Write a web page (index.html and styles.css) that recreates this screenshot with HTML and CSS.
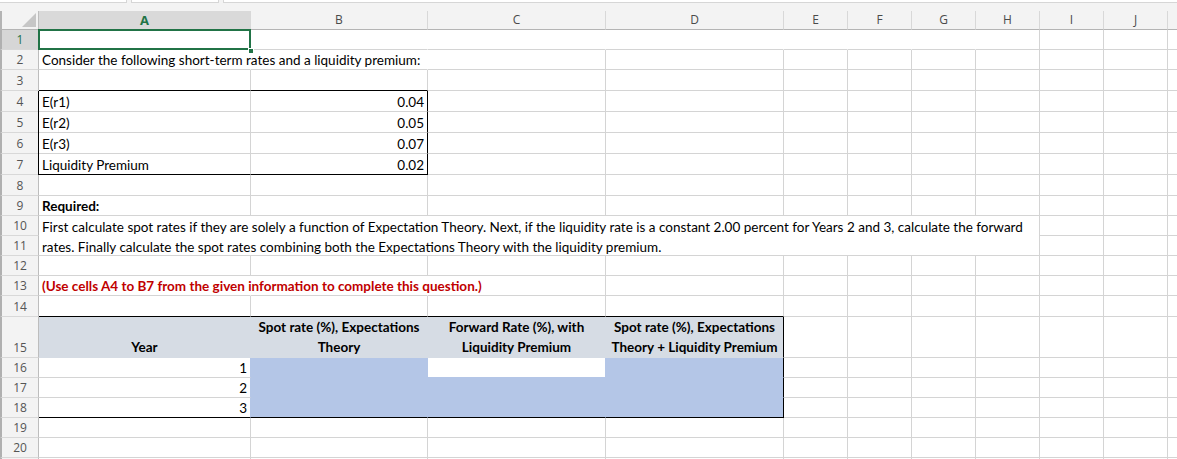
FILE: index.html
```html
<!DOCTYPE html>
<html>
<head>
<meta charset="utf-8">
<title>Sheet</title>
<link rel="stylesheet" href="styles.css">
</head>
<body>
<div class="sheet">
  <div class="topbar"><div class="fb fb1"></div><div class="fb fb2"></div><div class="fb fb3"></div></div>

  <div class="corner"><svg class="tri" width="37" height="18" viewBox="0 0 37 18"><polygon points="20,16 34,16 34,2" fill="#c6c6c6"/></svg></div>
  <div class="ch sel">A</div><div class="ch">B</div><div class="ch">C</div><div class="ch">D</div><div class="ch">E</div><div class="ch">F</div><div class="ch">G</div><div class="ch">H</div><div class="ch">I</div><div class="ch">J</div><div class="ch k"></div>

  <div class="rh sel">1</div><div class="c nr"></div><div class="c nr"></div><div class="c nr"></div><div class="c nr"></div><div class="c nr"></div><div class="c nr"></div><div class="c nr"></div><div class="c"></div><div class="c"></div><div class="c"></div><div class="c k"></div>

  <div class="rh">2</div><div class="c nr">Consider the following short-term rates and a liquidity premium:</div><div class="c nr"></div><div class="c"></div><div class="c"></div><div class="c"></div><div class="c"></div><div class="c"></div><div class="c"></div><div class="c"></div><div class="c"></div><div class="c k"></div>

  <div class="rh">3</div><div class="c bb"></div><div class="c bb"></div><div class="c"></div><div class="c"></div><div class="c"></div><div class="c"></div><div class="c"></div><div class="c"></div><div class="c"></div><div class="c"></div><div class="c k"></div>

  <div class="rh">4</div><div class="c bl">E(r1)</div><div class="c br num">0.04</div><div class="c"></div><div class="c"></div><div class="c"></div><div class="c"></div><div class="c"></div><div class="c"></div><div class="c"></div><div class="c"></div><div class="c k"></div>

  <div class="rh">5</div><div class="c bl">E(r2)</div><div class="c br num">0.05</div><div class="c"></div><div class="c"></div><div class="c"></div><div class="c"></div><div class="c"></div><div class="c"></div><div class="c"></div><div class="c"></div><div class="c k"></div>

  <div class="rh">6</div><div class="c bl">E(r3)</div><div class="c br num">0.07</div><div class="c"></div><div class="c"></div><div class="c"></div><div class="c"></div><div class="c"></div><div class="c"></div><div class="c"></div><div class="c"></div><div class="c k"></div>

  <div class="rh">7</div><div class="c bl bb">Liquidity Premium</div><div class="c br bb num">0.02</div><div class="c"></div><div class="c"></div><div class="c"></div><div class="c"></div><div class="c"></div><div class="c"></div><div class="c"></div><div class="c"></div><div class="c k"></div>

  <div class="rh">8</div><div class="c"></div><div class="c"></div><div class="c"></div><div class="c"></div><div class="c"></div><div class="c"></div><div class="c"></div><div class="c"></div><div class="c"></div><div class="c"></div><div class="c k"></div>

  <div class="rh">9</div><div class="c bold">Required:</div><div class="c"></div><div class="c"></div><div class="c"></div><div class="c"></div><div class="c"></div><div class="c"></div><div class="c"></div><div class="c"></div><div class="c"></div><div class="c k"></div>

  <div class="rh">10</div><div class="c merge">First calculate spot rates if they are solely a function of Expectation Theory. Next, if the liquidity rate is a constant 2.00 percent for Years 2 and 3, calculate the forward<br>rates. Finally calculate the spot rates combining both the Expectations Theory with the liquidity premium.</div><div class="c"></div><div class="c"></div><div class="c k"></div>

  <div class="rh">11</div><div class="c"></div><div class="c"></div><div class="c k"></div>

  <div class="rh">12</div><div class="c"></div><div class="c"></div><div class="c"></div><div class="c"></div><div class="c"></div><div class="c"></div><div class="c"></div><div class="c"></div><div class="c"></div><div class="c"></div><div class="c k"></div>

  <div class="rh">13</div><div class="c nr note">(Use cells A4 to B7 from the given information to complete this question.)</div><div class="c nr"></div><div class="c"></div><div class="c"></div><div class="c"></div><div class="c"></div><div class="c"></div><div class="c"></div><div class="c"></div><div class="c"></div><div class="c k"></div>

  <div class="rh">14</div><div class="c bb"></div><div class="c bb"></div><div class="c bb"></div><div class="c bb"></div><div class="c"></div><div class="c"></div><div class="c"></div><div class="c"></div><div class="c"></div><div class="c"></div><div class="c k"></div>

  <div class="rh">15</div><div class="c hdr">Year</div><div class="c hdr">Spot rate (%), Expectations<br>Theory</div><div class="c hdr">Forward Rate (%), with<br>Liquidity Premium</div><div class="c hdr br">Spot rate (%), Expectations<br>Theory + Liquidity Premium</div><div class="c"></div><div class="c"></div><div class="c"></div><div class="c"></div><div class="c"></div><div class="c"></div><div class="c k"></div>

  <div class="rh">16</div><div class="c num nextfill">1</div><div class="c fill"></div><div class="c blank"></div><div class="c fill br"></div><div class="c"></div><div class="c"></div><div class="c"></div><div class="c"></div><div class="c"></div><div class="c"></div><div class="c k"></div>

  <div class="rh">17</div><div class="c num nextfill">2</div><div class="c fill"></div><div class="c fill"></div><div class="c fill br"></div><div class="c"></div><div class="c"></div><div class="c"></div><div class="c"></div><div class="c"></div><div class="c"></div><div class="c k"></div>

  <div class="rh">18</div><div class="c num nextfill bb">3</div><div class="c fill bb"></div><div class="c fill bb"></div><div class="c fill br bb"></div><div class="c"></div><div class="c"></div><div class="c"></div><div class="c"></div><div class="c"></div><div class="c"></div><div class="c k"></div>

  <div class="rh">19</div><div class="c"></div><div class="c"></div><div class="c"></div><div class="c"></div><div class="c"></div><div class="c"></div><div class="c"></div><div class="c"></div><div class="c"></div><div class="c"></div><div class="c k"></div>

  <div class="rh">20</div><div class="c"></div><div class="c"></div><div class="c"></div><div class="c"></div><div class="c"></div><div class="c"></div><div class="c"></div><div class="c"></div><div class="c"></div><div class="c"></div><div class="c k"></div>

  <div class="rh"></div><div class="c"></div><div class="c"></div><div class="c"></div><div class="c"></div><div class="c"></div><div class="c"></div><div class="c"></div><div class="c"></div><div class="c"></div><div class="c"></div><div class="c k"></div>

  <div class="selection"><span class="handle"></span></div>
</div>
</body>
</html>
```

FILE: styles.css
```css
* { box-sizing: border-box; }

html, body {
  margin: 0;
  padding: 0;
  background: #ffffff;
  overflow: hidden;
}

.sheet {
  position: relative;
  display: grid;
  grid-template-columns: 39px 212px 177px 178px 178px repeat(6, 64px) 1fr;
  grid-template-rows: 11px 19px 20px 20px repeat(6, 21px) repeat(5, 20px) 21px 41px repeat(5, 20px) 20px;
  width: 1177px;
  height: 459px;
  overflow: hidden;
  font-family: "Lato", "Liberation Sans", sans-serif;
  font-size: 13.5px;
  color: #000;
}

/* formula bar strip and gap above the column headers */
.topbar {
  grid-column: 1 / -1;
  display: flex;
  gap: 4px;
  align-items: flex-start;
  background: #f3f3f3;
}
.fb {
  height: 3px;
  background: #ffffff;
  border-bottom: 1px solid #d6d6d6;
}
.fb1 { width: 127px; border-right: 1px solid #d6d6d6; }
.fb2 { width: 88px; border-left: 1px solid #d6d6d6; border-right: 1px solid #d6d6d6; }
.fb3 { flex: 1; border-left: 1px solid #d6d6d6; }

/* headers */
.corner {
  background: #f3f3f3;
  border-left: 2px solid #b4b4b4;
  border-right: 1px solid #bdbdbd;
  border-bottom: 1px solid #b4b4b4;
}
.tri { display: block; }

.ch {
  background: #f3f3f3;
  border-right: 1px solid #d8d8d8;
  border-bottom: 1px solid #b4b4b4;
  display: flex;
  align-items: center;
  justify-content: center;
  font-family: "Open Sans", "Noto Sans", sans-serif;
  font-size: 12px;
  color: #4a4a4a;
  line-height: 18px;
}
.ch.sel {
  background: #d9d9d9;
  color: #217346;
  font-weight: bold;
  font-size: 13px;
}
.ch.k { border-right: none; }

.rh {
  background: #f3f3f3;
  border-left: 2px solid #b0b0b0;
  border-right: 1px solid #bdbdbd;
  border-bottom: 1px solid #d8d8d8;
  display: flex;
  align-items: flex-end;
  justify-content: center;
  padding-bottom: 1px;
  font-family: "Open Sans", "Noto Sans", sans-serif;
  font-size: 12px;
  line-height: 17px;
  color: #555555;
}
.rh.sel {
  background: #d6d6d6;
  color: #217346;
}

/* cells */
.c {
  border-right: 1px solid #d4d4d4;
  border-bottom: 1px solid #d4d4d4;
  display: flex;
  align-items: flex-end;
  padding: 0 3px 0 3px;
  white-space: nowrap;
  line-height: 18px;
  min-width: 0;
}
.c.k { border-right: none; }
.c.nr { border-right-color: transparent; }
.c.num { justify-content: flex-end; }
.c.bold { font-weight: bold; }
.c.note { font-weight: bold; color: #c00000; }

.c.merge {
  grid-column: span 8;
  grid-row: span 2;
  display: block;
  padding-top: 1px;
  line-height: 20px;
}

/* summary table */
.c.hdr {
  background: #d6dce4;
  border-right-color: #d6dce4;
  border-bottom-color: #d6dce4;
  justify-content: center;
  text-align: center;
  font-weight: bold;
  line-height: 20px;
  padding: 0 2px;
}
.c.fill {
  background: #b4c6e7;
  border-right-color: #b4c6e7;
  border-bottom-color: #b4c6e7;
}
.c.blank {
  border-right-color: #b4c6e7;
  border-bottom-color: #b4c6e7;
}
.c.nextfill { border-right-color: #b4c6e7; }

/* black outlines */
.c.bb { border-bottom-color: #000; }
.c.br { border-right-color: #000; }
.c.bl { box-shadow: -1px 0 0 #000; }

/* active cell */
.selection {
  position: absolute;
  left: 38px;
  top: 29px;
  width: 213px;
  height: 21px;
  border: 2px solid #217346;
  pointer-events: none;
}
.handle {
  position: absolute;
  left: 208px;
  top: 17px;
  width: 6px;
  height: 6px;
  background: #217346;
  border: 1px solid #ffffff;
}
```
